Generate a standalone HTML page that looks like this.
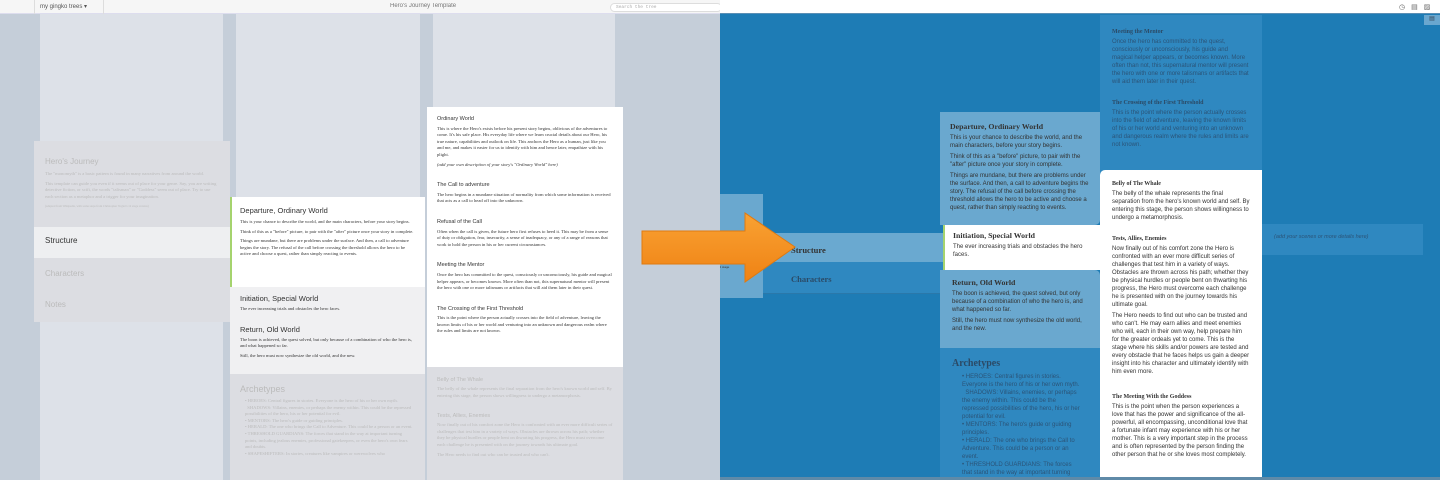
<!DOCTYPE html>
<html><head><style>
*{margin:0;padding:0;box-sizing:border-box}
html,body{width:1440px;height:480px;overflow:hidden}
body{position:relative;background:#c6cfd9;font-family:"Liberation Sans",sans-serif}
.a{position:absolute;overflow:hidden}
.s{font-family:"Liberation Serif",serif;font-size:4.6px;line-height:6.6px;color:#333}
.h{font-family:"Liberation Sans",sans-serif;font-size:7.5px;color:#333}
.r{font-family:"Liberation Sans",sans-serif;font-size:6px;line-height:8px;color:#333}
.rh{font-family:"Liberation Serif",serif;font-weight:bold;font-size:7.8px;color:#333}
p{margin-bottom:3px}
</style></head><body>
<!-- LEFT -->
<div class="a" style="left:0;top:0;width:720px;height:480px;background:#c5ced9"></div>
<div class="a" style="left:40px;top:14px;width:183px;height:466px;background:#dde1e8"></div>
<div class="a" style="left:236px;top:14px;width:184px;height:466px;background:#dde1e8"></div>
<div class="a" style="left:433px;top:14px;width:182px;height:466px;background:#dde1e8"></div>
<div class="a" style="left:0;top:0;width:720px;height:14px;background:#f6f6f6;border-bottom:1px solid #dde"></div>
<div class="a" style="left:34px;top:0;width:70px;height:14px;border-left:1px solid #ddd;border-right:1px solid #ddd;font-size:6px;line-height:14px;color:#555;padding-left:5px">my gingko trees ▾</div>
<div class="a" style="left:390px;top:3px;font-size:6px;color:#777">Hero's Journey Template</div>
<div class="a" style="left:610px;top:3px;width:112px;height:9px;border:1px solid #ddd;border-radius:5px;background:#fff;font-size:4.5px;color:#aaa;padding:1px 5px;font-family:'Liberation Mono',monospace">Search the tree</div>
<div class="a" style="left:34px;top:141px;width:196px;height:86px;background:#dcdde2;padding:16px 11px 0;color:#bbb">
<div style="font-size:8px;margin-bottom:5px">Hero's Journey</div>
<div class="s" style="color:#bbb"><p>The "monomyth" is a basic pattern is found in many narratives from around the world.</p><p>This template can guide you even if it seems out of place for your genre. Say, you are writing detective fiction, or scifi, the words "talisman" or "Goddess" seem out of place. Try to use each section as a metaphor and a trigger for your imagination.</p><p style="font-size:3px">(adapted from Wikipedia, with some steps from Christopher Vogler's 12 stage version)</p></div></div>
<div class="a" style="left:34px;top:227px;width:196px;height:31px;background:#eeeff1;padding:9px 11px;font-size:8px;color:#333">Structure</div>
<div class="a" style="left:34px;top:258px;width:196px;height:64px;background:#dcdde2;padding:0 11px;font-size:8px;color:#bbb;line-height:31px">Characters<br>Notes</div>
<div class="a" style="left:230px;top:197px;width:195px;height:90px;background:#fff;border-left:2px solid #a5d36e;padding:9px 8px">
<div class="h" style="margin-bottom:4px">Departure, Ordinary World</div>
<div class="s"><p>This is your chance to describe the world, and the main characters, before your story begins.</p><p>Think of this as a "before" picture, to pair with the "after" picture once your story in complete.</p><p>Things are mundane, but there are problems under the surface. And then, a call to adventure begins the story. The refusal of the call before crossing the threshold allows the hero to be active and choose a quest, rather than simply reacting to events.</p></div></div>
<div class="a" style="left:230px;top:287px;width:195px;height:87px;background:#f0f0f2;padding:7px 10px">
<div class="h" style="margin-bottom:3px">Initiation, Special World</div>
<div class="s" style="margin-bottom:12px">The ever increasing trials and obstacles the hero faces.</div>
<div class="h" style="margin-bottom:3px">Return, Old World</div>
<div class="s"><p>The boon is achieved, the quest solved, but only because of a combination of who the hero is, and what happened so far.</p><p>Still, the hero must now synthesize the old world, and the new.</p></div></div>
<div class="a" style="left:230px;top:374px;width:195px;height:106px;background:#dcdde2;padding:10px 10px;color:#bbb">
<div style="font-size:9px;margin-bottom:4px">Archetypes</div>
<div class="s" style="color:#bbb;padding-left:5px">• HEROES: Central figures in stories. Everyone is the hero of his or her own myth.<br>&nbsp; SHADOWS: Villains, enemies, or perhaps the enemy within. This could be the repressed possibilities of the hero, his or her potential for evil.<br>• MENTORS: The hero's guide or guiding principles.<br>• HERALD: The one who brings the Call to Adventure. This could be a person or an event.<br>• THRESHOLD GUARDIANS: The forces that stand in the way at important turning points, including jealous enemies, professional gatekeepers, or even the hero's own fears and doubts.<br>• SHAPESHIFTERS: In stories, creatures like vampires or werewolves who</div></div>
<div class="a" style="left:427px;top:107px;width:196px;height:260px;background:#fff;padding:9px 10px">
<div class="s" style="font-family:'Liberation Sans';font-size:5.5px;margin-bottom:3px">Ordinary World</div>
<div class="s"><p>This is where the Hero's exists before his present story begins, oblivious of the adventures to come. It's his safe place. His everyday life where we learn crucial details about our Hero, his true nature, capabilities and outlook on life. This anchors the Hero as a human, just like you and me, and makes it easier for us to identify with him and hence later, empathize with his plight.</p><p><i>(add your own description of your story's "Ordinary World" here)</i></p></div>
<div class="s" style="font-family:'Liberation Sans';font-size:5.5px;margin:14px 0 3px">The Call to adventure</div>
<div class="s">The hero begins in a mundane situation of normality from which some information is received that acts as a call to head off into the unknown.</div>
<div class="s" style="font-family:'Liberation Sans';font-size:5.5px;margin:14px 0 3px">Refusal of the Call</div>
<div class="s">Often when the call is given, the future hero first refuses to heed it. This may be from a sense of duty or obligation, fear, insecurity, a sense of inadequacy, or any of a range of reasons that work to hold the person in his or her current circumstances.</div>
<div class="s" style="font-family:'Liberation Sans';font-size:5.5px;margin:14px 0 3px">Meeting the Mentor</div>
<div class="s">Once the hero has committed to the quest, consciously or unconsciously, his guide and magical helper appears, or becomes known. More often than not, this supernatural mentor will present the hero with one or more talismans or artifacts that will aid them later in their quest.</div>
<div class="s" style="font-family:'Liberation Sans';font-size:5.5px;margin:14px 0 3px">The Crossing of the First Threshold</div>
<div class="s">This is the point where the person actually crosses into the field of adventure, leaving the known limits of his or her world and venturing into an unknown and dangerous realm where the rules and limits are not known.</div></div>
<div class="a" style="left:427px;top:367px;width:196px;height:113px;background:#dcdde2;padding:10px 10px;color:#bbb">
<div style="font-size:5.5px;margin-bottom:3px">Belly of The Whale</div>
<div class="s" style="color:#bbb">The belly of the whale represents the final separation from the hero's known world and self. By entering this stage, the person shows willingness to undergo a metamorphosis.</div>
<div style="font-size:5.5px;margin:14px 0 3px">Tests, Allies, Enemies</div>
<div class="s" style="color:#bbb"><p>Now finally out of his comfort zone the Hero is confronted with an ever more difficult series of challenges that test him in a variety of ways. Obstacles are thrown across his path; whether they be physical hurdles or people bent on thwarting his progress, the Hero must overcome each challenge he is presented with on the journey towards his ultimate goal.</p><p>The Hero needs to find out who can be trusted and who can't.</p></div></div>
<!-- RIGHT -->
<div class="a" style="left:720px;top:0;width:720px;height:480px;background:#1e7cb5"></div>
<div class="a" style="left:720px;top:0;width:720px;height:14px;background:#fff;border-bottom:1px solid #5a8fb5"></div>
<div class="a" style="left:1399px;top:3px;font-size:7px;color:#666;letter-spacing:6px">◷▤▨</div>
<div class="a" style="left:1424px;top:15px;width:16px;height:10px;background:#6aa7cf;font-size:6px;color:#345;text-align:center">▤</div>
<div class="a" style="left:720px;top:194px;width:43px;height:104px;background:#6aa8cf">
<div class="r" style="position:absolute;left:-20px;top:28px;width:60px;font-size:5px;line-height:7px">tern is fo<br>world.<br><br><br><b>section</b><br>magination<br><span style="font-size:3px">opher Vogler 12 stage</span></div></div>
<div class="a" style="left:763px;top:233px;width:278px;height:29px;background:#6aa9d0;padding:7px 28px" ><span class="rh" style="font-size:8.5px">Structure</span></div>
<div class="a" style="left:763px;top:262px;width:278px;height:32px;background:#2f88c0;padding:7px 28px;border-bottom:1px solid #2a78aa"><span class="rh" style="font-size:8.5px;color:#2b4a66">Characters</span></div>
<div class="a" style="left:940px;top:112px;width:160px;height:113px;background:#6aa8cf;border-radius:0 0 5px 0;padding:10px 10px">
<div class="rh" style="margin-bottom:3px">Departure, Ordinary World</div>
<div class="r"><p>This is your chance to describe the world, and the main characters, before your story begins.</p><p>Think of this as a "before" picture, to pair with the "after" picture once your story in complete.</p><p>Things are mundane, but there are problems under the surface. And then, a call to adventure begins the story. The refusal of the call before crossing the threshold allows the hero to be active and choose a quest, rather than simply reacting to events.</p></div></div>
<div class="a" style="left:943px;top:225px;width:158px;height:45px;background:#fff;border-left:2px solid #a5d36e;padding:6px 8px">
<div class="rh" style="margin-bottom:3px">Initiation, Special World</div>
<div class="r">The ever increasing trials and obstacles the hero faces.</div></div>
<div class="a" style="left:940px;top:270px;width:160px;height:78px;background:#6aa8cf;border-radius:0 5px 0 0;padding:8px 12px">
<div class="rh" style="margin-bottom:3px">Return, Old World</div>
<div class="r"><p>The boon is achieved, the quest solved, but only because of a combination of who the hero is, and what happened so far.</p><p>Still, the hero must now synthesize the old world, and the new.</p></div></div>
<div class="a" style="left:940px;top:348px;width:160px;height:132px;background:#2f88c0;padding:10px 12px">
<div class="rh" style="font-size:10px;color:#2b4a66;margin-bottom:4px">Archetypes</div>
<div class="r" style="color:#2b5478;padding-left:10px;padding-right:6px">• HEROES: Central figures in stories. Everyone is the hero of his or her own myth.<br>&nbsp; SHADOWS: Villains, enemies, or perhaps the enemy within. This could be the repressed possibilities of the hero, his or her potential for evil.<br>• MENTORS: The hero's guide or guiding principles.<br>• HERALD: The one who brings the Call to Adventure. This could be a person or an event.<br>• THRESHOLD GUARDIANS: The forces that stand in the way at important turning points, including jealous enemies, professional</div></div>
<div class="a" style="left:1100px;top:15px;width:162px;height:158px;background:#2f88c0;padding:14px 12px">
<div class="rh" style="font-size:6px;color:#2b4a66;margin-bottom:3px">Meeting the Mentor</div>
<div class="r" style="color:#2b5478">Once the hero has committed to the quest, consciously or unconsciously, his guide and magical helper appears, or becomes known. More often than not, this supernatural mentor will present the hero with one or more talismans or artifacts that will aid them later in their quest.</div>
<div class="rh" style="font-size:6px;color:#2b4a66;margin:14px 0 3px">The Crossing of the First Threshold</div>
<div class="r" style="color:#2b5478">This is the point where the person actually crosses into the field of adventure, leaving the known limits of his or her world and venturing into an unknown and dangerous realm where the rules and limits are not known.</div></div>
<div class="a" style="left:1100px;top:170px;width:162px;height:307px;background:#fff;border-radius:5px 0 0 0;padding:11px 12px">
<div class="rh" style="font-size:6px;margin-bottom:3px">Belly of The Whale</div>
<div class="r">The belly of the whale represents the final separation from the hero's known world and self. By entering this stage, the person shows willingness to undergo a metamorphosis.</div>
<div class="rh" style="font-size:6px;margin:14px 0 3px">Tests, Allies, Enemies</div>
<div class="r"><p>Now finally out of his comfort zone the Hero is confronted with an ever more difficult series of challenges that test him in a variety of ways. Obstacles are thrown across his path; whether they be physical hurdles or people bent on thwarting his progress, the Hero must overcome each challenge he is presented with on the journey towards his ultimate goal.</p><p>The Hero needs to find out who can be trusted and who can't. He may earn allies and meet enemies who will, each in their own way, help prepare him for the greater ordeals yet to come. This is the stage where his skills and/or powers are tested and every obstacle that he faces helps us gain a deeper insight into his character and ultimately identify with him even more.</p></div>
<div class="rh" style="font-size:6px;margin:18px 0 3px">The Meeting With the Goddess</div>
<div class="r">This is the point when the person experiences a love that has the power and significance of the all-powerful, all encompassing, unconditional love that a fortunate infant may experience with his or her mother. This is a very important step in the process and is often represented by the person finding the other person that he or she loves most completely.</div></div>
<div class="a" style="left:1262px;top:224px;width:161px;height:31px;background:#2f88c0;padding:9px 12px"><div class="r" style="color:#2b5478;font-style:italic;font-size:5.5px">(add your scenes or more details here)</div></div>
<div class="a" style="left:720px;top:477px;width:720px;height:3px;background:#5f8aa8"></div>
<!-- arrow -->
<svg class="a" style="left:630px;top:205px;overflow:visible" width="175" height="85" viewBox="0 0 175 85">
<defs><linearGradient id="g" x1="0" y1="0" x2="0" y2="1"><stop offset="0" stop-color="#f9a233"/><stop offset="1" stop-color="#ef8214"/></linearGradient></defs>
<path d="M12 26 L115 26 L115 8 L165 42 L115 77 L115 59 L12 59 Z" fill="url(#g)" stroke="#e07a10" stroke-width="1"/>
</svg>
</body></html>
